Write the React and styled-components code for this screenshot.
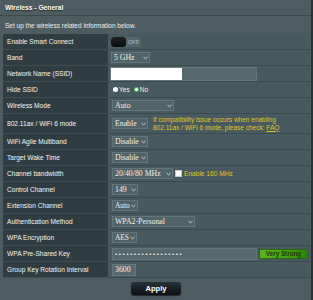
import React from "react"
import styled, { createGlobalStyle } from "styled-components"

const GlobalStyle = createGlobalStyle`
  html, body {
    margin: 0;
    padding: 0;
    background: #4d5c61;
  }
  body {
    font-family: "Liberation Sans", Arial, sans-serif;
  }
`

const Panel = styled.div`
  box-sizing: border-box;
  width: 313px;
  height: 300px;
  background: #4d5c61;
  border-right: 2px solid #283135;
  overflow: hidden;
`

const Title = styled.div`
  box-sizing: border-box;
  height: 16px;
  padding-left: 5px;
  display: flex;
  align-items: center;
  font-size: 6.7px;
  font-weight: bold;
  color: #ffffff;
  text-shadow: 0 1px 1px #1c2427;
  border-bottom: 1px solid #3c494e;
`

const Desc = styled.div`
  height: 18px;
  padding-left: 5px;
  display: flex;
  align-items: center;
  font-size: 6.5px;
  color: #eef1f1;
`

const Table = styled.div`
  margin-left: 3px;
  width: 307px;
`

const Row = styled.div`
  display: grid;
  grid-template-columns: 105px 1fr;
  height: ${(p) => (p.$tall ? 20 : 16)}px;
`

const Label = styled.div`
  box-sizing: border-box;
  background: #2f3c41;
  color: #f4f4f4;
  padding-left: 4px;
  display: flex;
  align-items: center;
  font-size: 6.6px;
  border-bottom: 1px solid #3f4d52;
`

const Cell = styled.div`
  box-sizing: border-box;
  background: #475a5f;
  display: flex;
  align-items: center;
  padding-left: ${(p) => p.$pad ?? 4}px;
  gap: ${(p) => p.$gap ?? 4}px;
  border-bottom: 1px solid #3a4b50;
`

const SelectBox = styled.div`
  box-sizing: border-box;
  min-width: ${(p) => p.$w}px;
  height: 11px;
  background: #4f6368;
  border: 1px solid #62767b;
  display: flex;
  align-items: center;
  justify-content: space-between;
  gap: 1px;
  padding: 0 1.5px 0 2px;
  font-family: "Liberation Serif", "Times New Roman", serif;
  font-size: ${(p) => (p.$small ? 7.4 : 7.8)}px;
  white-space: nowrap;
  color: #f2f2f2;
  flex-shrink: 0;
`

const Chevron = styled.svg`
  width: 5px;
  height: 4px;
  flex-shrink: 0;
`

const Select = ({ w, small, children }) => (
  <SelectBox $w={w} $small={small}>
    <span>{children}</span>
    <Chevron viewBox="0 0 5 4">
      <path d="M0.6 1 L2.5 2.8 L4.4 1" fill="none" stroke="#dfe3e4" strokeWidth="0.9" />
    </Chevron>
  </SelectBox>
)

const Toggle = styled.div`
  display: flex;
  width: 30px;
  height: 10px;
  border-radius: 3px;
  background: #56676c;
  overflow: hidden;
`

const Knob = styled.div`
  width: 15px;
  height: 10px;
  border-radius: 3px;
  background: linear-gradient(#1c1f20, #0b0c0d);
`

const OffText = styled.div`
  flex: 1;
  display: flex;
  align-items: center;
  justify-content: center;
  font-size: 5.5px;
  color: #b4bec1;
`

const TextInput = styled.div`
  box-sizing: border-box;
  width: ${(p) => p.$w}px;
  height: ${(p) => p.$h ?? 12}px;
  background: ${(p) => (p.$redact ? "linear-gradient(to right, #ffffff 71px, #56696e 71px)" : "#56696e")};
  border: 1px solid #64777c;
  display: flex;
  align-items: center;
  padding-left: 2px;
  font-family: ${(p) => (p.$serif ? '"Liberation Serif", "Times New Roman", serif' : '"Liberation Sans", Arial, sans-serif')};
  font-size: ${(p) => (p.$serif ? 7.8 : 6)}px;
  letter-spacing: ${(p) => p.$spacing ?? 0}px;
  color: #f4f4f4;
  flex-shrink: 0;
`

const RadioGroup = styled.div`
  display: flex;
  align-items: center;
  gap: 3px;
  font-size: 6.6px;
  color: #f0f0f0;
`

const Radio = styled.span`
  box-sizing: border-box;
  width: 5px;
  height: 5px;
  border-radius: 50%;
  background: #ffffff;
  border: ${(p) => (p.$on ? "1.5px solid #3cc45a" : "none")};
  margin-right: 1px;
`

const RadioItem = styled.span`
  display: flex;
  align-items: center;
  margin-right: 1px;
`

const Note = styled.div`
  font-size: 6.5px;
  line-height: 8px;
  color: #e5c41e;
  a {
    color: #e5c41e;
    text-decoration: underline;
  }
`

const CheckLabel = styled.label`
  display: flex;
  align-items: center;
  gap: 2px;
  font-size: 6.6px;
  color: #e5c41e;
  margin-left: -1px;
`

const Check = styled.span`
  width: 5px;
  height: 5px;
  background: #ffffff;
  border: 0.5px solid #c9c9c9;
`

const Strength = styled.div`
  box-sizing: border-box;
  width: 49px;
  height: 10px;
  background: linear-gradient(to right, #5cb814, #3d9a0a 70%, #2f8408);
  border: 1px solid #2d6610;
  display: flex;
  align-items: center;
  justify-content: center;
  font-size: 6.3px;
  font-weight: bold;
  color: #1f3a10;
`

const Footer = styled.div`
  display: flex;
  justify-content: center;
  padding-top: 4px;
  padding-left: 1px;
`

const ApplyButton = styled.button`
  width: 50px;
  height: 13px;
  border: none;
  border-radius: 3px;
  background: linear-gradient(#25323a, #0c1113);
  box-shadow: 0 1px 1px #20292c;
  color: #ffffff;
  font-family: "Liberation Sans", Arial, sans-serif;
  font-size: 7.6px;
  font-weight: bold;
  padding: 0;
`

const App = () => {
  return (
    <>
      <GlobalStyle />
      <Panel>
        <Title>Wireless - General</Title>
        <Desc>Set up the wireless related information below.</Desc>
        <Table>
          <Row>
            <Label>Enable Smart Connect</Label>
            <Cell $pad={3}>
              <Toggle>
                <Knob />
                <OffText>OFF</OffText>
              </Toggle>
            </Cell>
          </Row>
          <Row>
            <Label>Band</Label>
            <Cell $pad={3}>
              <Select w={39}>5 GHz</Select>
            </Cell>
          </Row>
          <Row>
            <Label>Network Name (SSID)</Label>
            <Cell $pad={2}>
              <TextInput $w={147} $h={14} $redact />
            </Cell>
          </Row>
          <Row>
            <Label>Hide SSID</Label>
            <Cell $pad={5}>
              <RadioGroup>
                <RadioItem>
                  <Radio />
                  Yes
                </RadioItem>
                <RadioItem>
                  <Radio $on />
                  No
                </RadioItem>
              </RadioGroup>
            </Cell>
          </Row>
          <Row>
            <Label>Wireless Mode</Label>
            <Cell>
              <Select w={62}>Auto</Select>
            </Cell>
          </Row>
          <Row $tall>
            <Label>802.11ax / WiFi 6 mode</Label>
            <Cell $gap={5}>
              <Select w={36}>Enable</Select>
              <Note>
                If compatibility issue occurs when enabling
                <br />
                802.11ax / WiFi 6 mode, please check: <a>FAQ</a>
              </Note>
            </Cell>
          </Row>
          <Row>
            <Label>WiFi Agile Multiband</Label>
            <Cell>
              <Select w={36}>Disable</Select>
            </Cell>
          </Row>
          <Row>
            <Label>Target Wake Time</Label>
            <Cell>
              <Select w={36}>Disable</Select>
            </Cell>
          </Row>
          <Row>
            <Label>Channel bandwidth</Label>
            <Cell $gap={3}>
              <Select w={61}>20/40/80 MHz</Select>
              <CheckLabel>
                <Check />
                Enable 160 MHz
              </CheckLabel>
            </Cell>
          </Row>
          <Row>
            <Label>Control Channel</Label>
            <Cell>
              <Select w={26}>149</Select>
            </Cell>
          </Row>
          <Row>
            <Label>Extension Channel</Label>
            <Cell>
              <Select w={26} small>
                Auto
              </Select>
            </Cell>
          </Row>
          <Row>
            <Label>Authentication Method</Label>
            <Cell>
              <Select w={83}>WPA2-Personal</Select>
            </Cell>
          </Row>
          <Row>
            <Label>WPA Encryption</Label>
            <Cell>
              <Select w={25} small>
                AES
              </Select>
            </Cell>
          </Row>
          <Row>
            <Label>WPA Pre-Shared Key</Label>
            <Cell $gap={2}>
              <TextInput $w={145} $spacing={1.7}>
                ••••••••••••••••••
              </TextInput>
              <Strength>Very Strong</Strength>
            </Cell>
          </Row>
          <Row>
            <Label>Group Key Rotation Interval</Label>
            <Cell>
              <TextInput $w={24} $serif>
                3600
              </TextInput>
            </Cell>
          </Row>
        </Table>
        <Footer>
          <ApplyButton>Apply</ApplyButton>
        </Footer>
      </Panel>
    </>
  )
}

export default App
